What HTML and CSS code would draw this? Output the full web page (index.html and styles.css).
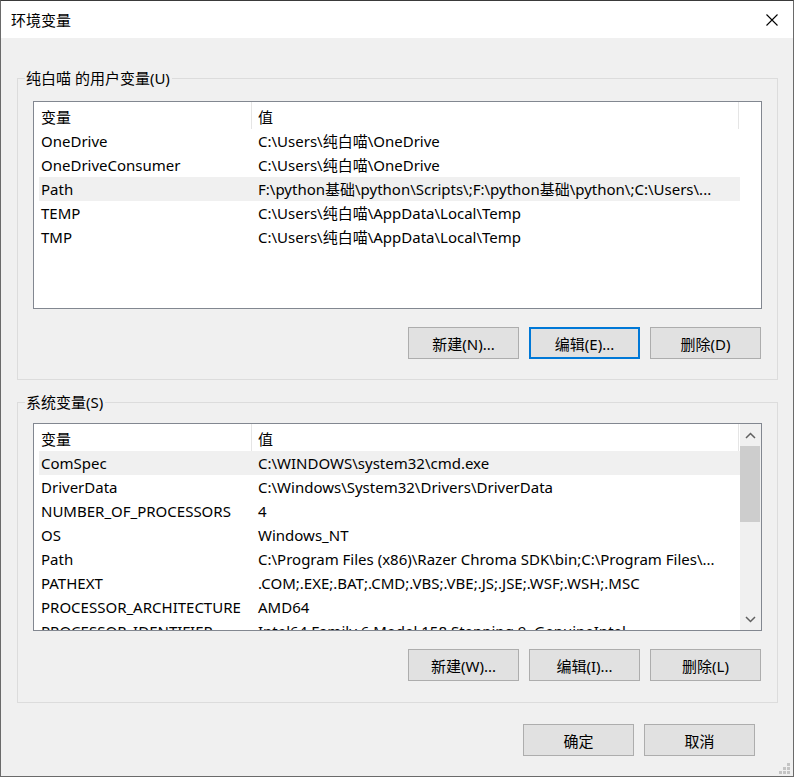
FILE: index.html
```html
<!DOCTYPE html>
<html lang="zh-CN">
<head>
    <meta charset="UTF-8">
    <title>环境变量</title>
    <link rel="stylesheet" href="styles.css">
</head>
<body>
    <div class="window">
        <div class="titlebar">
            <span class="title">环境变量</span>
            <svg class="close-btn" width="12" height="12" viewBox="0 0 12 12">
                <path d="M0.5 0.5 L11.5 11.5 M11.5 0.5 L0.5 11.5" stroke="#000" stroke-width="1.1" fill="none"/>
            </svg>
        </div>

        <div class="content">
            <fieldset class="group group-user">
                <legend>纯白喵 的用户变量(U)</legend>
                <div class="group-body">
                    <div class="listview">
                        <div class="lv-main">
                            <div class="lv-header">
                                <div class="cell">变量</div>
                                <div class="cell">值</div>
                            </div>
                            <div class="lv-row"><div class="cell">OneDrive</div><div class="cell">C:\Users\纯白喵\OneDrive</div></div>
                            <div class="lv-row"><div class="cell">OneDriveConsumer</div><div class="cell">C:\Users\纯白喵\OneDrive</div></div>
                            <div class="lv-row hover"><div class="cell">Path</div><div class="cell">F:\python基础\python\Scripts\;F:\python基础\python\;C:\Users\...</div></div>
                            <div class="lv-row"><div class="cell">TEMP</div><div class="cell">C:\Users\纯白喵\AppData\Local\Temp</div></div>
                            <div class="lv-row"><div class="cell">TMP</div><div class="cell">C:\Users\纯白喵\AppData\Local\Temp</div></div>
                        </div>
                        <div class="lv-side"></div>
                    </div>
                    <div class="btn-row">
                        <button class="btn">新建(N)...</button>
                        <button class="btn focused">编辑(E)...</button>
                        <button class="btn">删除(D)</button>
                    </div>
                </div>
            </fieldset>

            <fieldset class="group group-system">
                <legend>系统变量(S)</legend>
                <div class="group-body">
                    <div class="listview">
                        <div class="lv-main">
                            <div class="lv-header">
                                <div class="cell">变量</div>
                                <div class="cell">值</div>
                            </div>
                            <div class="lv-row hover"><div class="cell">ComSpec</div><div class="cell">C:\WINDOWS\system32\cmd.exe</div></div>
                            <div class="lv-row"><div class="cell">DriverData</div><div class="cell">C:\Windows\System32\Drivers\DriverData</div></div>
                            <div class="lv-row"><div class="cell">NUMBER_OF_PROCESSORS</div><div class="cell">4</div></div>
                            <div class="lv-row"><div class="cell">OS</div><div class="cell">Windows_NT</div></div>
                            <div class="lv-row"><div class="cell">Path</div><div class="cell">C:\Program Files (x86)\Razer Chroma SDK\bin;C:\Program Files\...</div></div>
                            <div class="lv-row"><div class="cell">PATHEXT</div><div class="cell">.COM;.EXE;.BAT;.CMD;.VBS;.VBE;.JS;.JSE;.WSF;.WSH;.MSC</div></div>
                            <div class="lv-row"><div class="cell">PROCESSOR_ARCHITECTURE</div><div class="cell">AMD64</div></div>
                            <div class="lv-row"><div class="cell">PROCESSOR_IDENTIFIER</div><div class="cell">Intel64 Family 6 Model 158 Stepping 9, GenuineIntel</div></div>
                        </div>
                        <div class="lv-side scrollbar">
                            <div class="sb-btn">
                                <svg width="11" height="7" viewBox="0 0 11 7"><path d="M1 6 L5.5 1.5 L10 6" stroke="#606060" stroke-width="1.5" fill="none"/></svg>
                            </div>
                            <div class="sb-track">
                                <div class="sb-thumb"></div>
                            </div>
                            <div class="sb-btn">
                                <svg width="11" height="7" viewBox="0 0 11 7"><path d="M1 1 L5.5 5.5 L10 1" stroke="#606060" stroke-width="1.5" fill="none"/></svg>
                            </div>
                        </div>
                    </div>
                    <div class="btn-row">
                        <button class="btn">新建(W)...</button>
                        <button class="btn">编辑(I)...</button>
                        <button class="btn">删除(L)</button>
                    </div>
                </div>
            </fieldset>

            <div class="dialog-actions">
                <button class="btn">确定</button>
                <button class="btn">取消</button>
            </div>
        </div>

        <!-- size grip -->
        <svg class="grip" width="11" height="11" viewBox="0 0 11 11">
            <rect x="8" y="0" width="3" height="3" fill="#c4c4c4"/>
            <rect x="4" y="4" width="3" height="3" fill="#c4c4c4"/>
            <rect x="8" y="4" width="3" height="3" fill="#c4c4c4"/>
            <rect x="0" y="8" width="3" height="3" fill="#c4c4c4"/>
            <rect x="4" y="8" width="3" height="3" fill="#c4c4c4"/>
            <rect x="8" y="8" width="3" height="3" fill="#c4c4c4"/>
        </svg>
    </div>
</body>
</html>
```

FILE: styles.css
```css
* {
    box-sizing: border-box;
}

body {
    margin: 0;
    padding: 0;
    font-family: "Noto Sans", "Noto Sans CJK SC", sans-serif;
    font-size: 15px;
    color: #000;
    background-color: #f0f0f0;
}

.window {
    position: relative;
    width: 794px;
    height: 777px;
    border: 1px solid #6a6a6a;
    border-top-color: #3a3a3a;
    background-color: #f0f0f0;
    overflow: hidden;
}

.titlebar {
    height: 37px;
    background-color: #fff;
    display: flex;
    align-items: center;
    justify-content: space-between;
    padding: 0 15px 0 10px;
}

.title {
    line-height: 20px;
}

.close-btn {
    display: block;
}

.content {
    padding: 30px 15px 0 16px;
}

/* group boxes */
.group {
    margin: 0;
    padding: 0;
    border: 1px solid #dcdcdc;
    min-width: 0;
}

.group legend {
    margin-left: 7px;
    padding: 0 2px 0 1px;
    line-height: 20px;
    height: 20px;
}

.group-system {
    margin-top: 12px;
}

.group-body {
    padding: 13px 15px 20px;
}

.group-system .group-body {
    padding-top: 11px;
    padding-bottom: 21px;
}

/* list view */
.listview {
    display: flex;
    height: 208px;
    border: 1px solid #828790;
    background-color: #fff;
    overflow: hidden;
}

.lv-main {
    flex: 1;
    padding-left: 5px;
    overflow: hidden;
}

.lv-side {
    width: 21px;
}

.lv-header,
.lv-row {
    display: grid;
    grid-template-columns: 213px 488px;
}

.lv-header {
    height: 27px;
}

.lv-header .cell {
    padding-top: 3px;
    line-height: 24px;
    border-right: 1px solid #e5e5e5;
}

.lv-header .cell:first-child {
    padding-left: 2px;
}

.lv-header .cell:last-child {
    padding-left: 6px;
    margin-right: 1px;
}

.lv-row {
    height: 24px;
    line-height: 24px;
}

.lv-row .cell {
    white-space: nowrap;
    overflow: hidden;
}

.lv-row .cell:first-child {
    padding-left: 2px;
}

.lv-row .cell:last-child {
    padding-left: 6px;
}

.lv-row.hover {
    background-color: #f0f0f0;
}

/* scrollbar */
.scrollbar {
    display: flex;
    flex-direction: column;
    background-color: #f0f0f0;
}

.sb-btn {
    height: 22px;
    display: flex;
    align-items: center;
    justify-content: center;
}

.sb-btn svg {
    display: block;
}

.sb-track {
    flex: 1;
}

.sb-thumb {
    height: 76px;
    margin: 0 1px 0 0;
    background-color: #cdcdcd;
}

/* buttons */
.btn-row,
.dialog-actions {
    display: flex;
    justify-content: flex-end;
    gap: 10px;
}

.btn-row {
    margin-top: 18px;
    padding-right: 1px;
}

.dialog-actions {
    margin-top: 21px;
    padding-right: 23px;
}

.btn {
    width: 111px;
    height: 32px;
    margin: 0;
    padding: 0;
    font-family: inherit;
    font-size: 15px;
    color: #000;
    background-color: #e1e1e1;
    border: 1px solid #adadad;
    border-radius: 0;
}

.btn.focused {
    border: 2px solid #0078d7;
}

.grip {
    position: absolute;
    right: 3px;
    bottom: 2px;
}
```
